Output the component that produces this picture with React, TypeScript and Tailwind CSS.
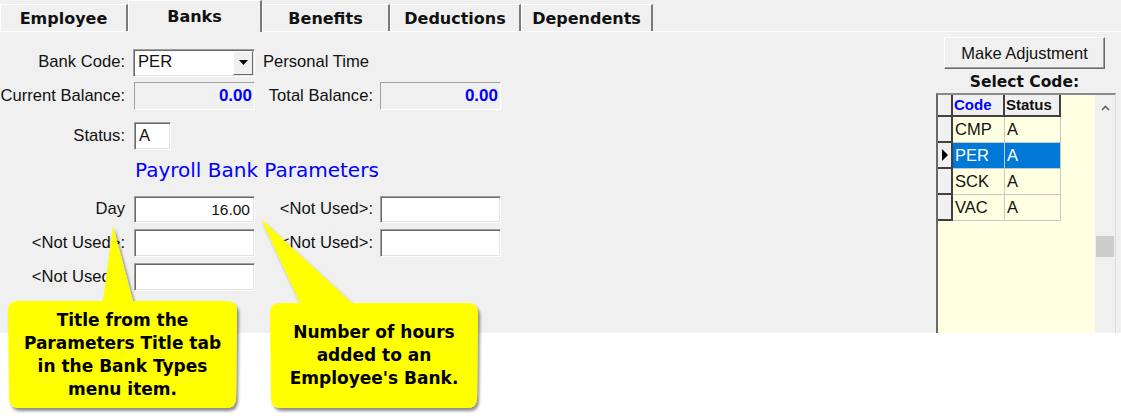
import React from 'react';

const tabs = [
  { label: 'Employee', cls: 'w-[128px]', active: false },
  { label: 'Banks', cls: 'w-[134px]', active: true },
  { label: 'Benefits', cls: 'w-[128px]', active: false },
  { label: 'Deductions', cls: 'w-[131px]', active: false },
  { label: 'Dependents', cls: 'w-[132px]', active: false },
];

const codes = [
  { code: 'CMP', status: 'A', selected: false },
  { code: 'PER', status: 'A', selected: true },
  { code: 'SCK', status: 'A', selected: false },
  { code: 'VAC', status: 'A', selected: false },
];

const sunken =
  'border border-t-[#a0a0a0] border-l-[#a0a0a0] border-b-white border-r-white shadow-[inset_1px_1px_0_#696969,inset_-1px_-1px_0_#e3e3e3] bg-white';

function Label({ text, w = 'w-[125px]' }: { text: string; w?: string }) {
  return <div className={`${w} shrink-0 text-right whitespace-nowrap`}>{text}</div>;
}

function TextBox({ value = '', w = 'w-[121px]', h = 'h-[27px]' }: { value?: string; w?: string; h?: string }) {
  return (
    <div className={`${w} ${h} ${sunken} flex items-center justify-end px-[4px] text-[15.5px]`}>{value}</div>
  );
}

function ReadOnlyBox({ value }: { value: string }) {
  return (
    <div className="w-[121px] h-[28px] border border-t-[#a0a0a0] border-l-[#a0a0a0] border-b-white border-r-white flex items-center justify-end pr-[2px] text-[17px] font-bold text-[#0000ff]">
      {value}
    </div>
  );
}

function Tabs() {
  return (
    <div className="flex items-end h-[32px] border-b border-white">
      {tabs.map((t) =>
        t.active ? (
          <div
            key={t.label}
            className={`${t.cls} h-[32px] -mb-px bg-[#f0f0f0] border-t border-l border-white border-r-2 border-r-[#7a7a7a] flex justify-center pt-[4px] font-bold text-[16px]`}
          >
            {t.label}
          </div>
        ) : (
          <div
            key={t.label}
            className={`${t.cls} h-[27px] border-t border-l border-white border-r-2 border-r-[#7a7a7a] flex items-center justify-center pt-px font-bold text-[16px]`}
          >
            {t.label}
          </div>
        )
      )}
    </div>
  );
}

function BankForm() {
  return (
    <div className="w-[936px] pt-[17px] font-['Liberation_Sans',Arial,sans-serif] text-[16.6px] text-[#111]">
      <div className="flex items-center h-[27px]">
        <Label text="Bank Code:" />
        <div className={`ml-[8px] w-[122px] h-[28px] ${sunken} flex items-center`}>
          <span className="pl-[4px] flex-1">PER</span>
          <div className="w-[20px] h-[24px] mr-[1px] bg-[#f0f0f0] border border-t-white border-l-white border-b-[#696969] border-r-[#696969] flex items-center justify-center">
            <svg width="9" height="5" viewBox="0 0 9 5">
              <path d="M0 0 H9 L4.5 5 Z" fill="#000" />
            </svg>
          </div>
        </div>
        <div className="ml-[8px]">Personal Time</div>
      </div>

      <div className="flex items-center h-[28px] mt-[6px]">
        <Label text="Current Balance:" />
        <div className="ml-[9px]">
          <ReadOnlyBox value="0.00" />
        </div>
        <Label text="Total Balance:" w="w-[118px]" />
        <div className="ml-[7px]">
          <ReadOnlyBox value="0.00" />
        </div>
      </div>

      <div className="flex items-center h-[28px] mt-[12px]">
        <Label text="Status:" />
        <div className={`ml-[9px] w-[37px] h-[28px] ${sunken} flex items-center pl-[4px]`}>A</div>
      </div>

      <div className="mt-[9px] ml-[135px] h-[22px] leading-[22px] text-[20px] text-[#0000ff] font-['DejaVu_Sans',Verdana,sans-serif]">
        Payroll Bank Parameters
      </div>

      <div className="flex items-center h-[27px] mt-[15px]">
        <Label text="Day" />
        <div className="ml-[9px]">
          <TextBox value="16.00" />
        </div>
        <Label text="<Not Used>:" w="w-[118px]" />
        <div className="ml-[7px]">
          <TextBox />
        </div>
      </div>

      <div className="flex items-center h-[28px] mt-[6px]">
        <Label text="<Not Used>:" />
        <div className="ml-[9px]">
          <TextBox h="h-[28px]" />
        </div>
        <Label text="<Not Used>:" w="w-[118px]" />
        <div className="ml-[7px]">
          <TextBox h="h-[28px]" />
        </div>
      </div>

      <div className="flex items-center h-[28px] mt-[6px]">
        <Label text="<Not Used>:" />
        <div className="ml-[9px]">
          <TextBox h="h-[28px]" />
        </div>
      </div>
    </div>
  );
}

function CodeGrid() {
  return (
    <div className="flex-1 w-[180px] flex border-t-2 border-l-2 border-t-[#8a8a8a] border-l-[#696969] border-r border-r-[#dcdcdc] overflow-hidden font-['Liberation_Sans',Arial,sans-serif]">
      <div className="flex-1 bg-[#ffffe1]">
        <div className="flex h-[22px] text-[15px] font-bold">
          <div className="w-[15px] bg-[#f0f0f0] border-r-2 border-b-2 border-[#404040]" />
          <div className="w-[52px] bg-[#f0f0f0] border-r-2 border-b-2 border-[#404040] pl-[1px] text-[#0000ff] flex items-center">
            Code
          </div>
          <div className="w-[56px] bg-[#f0f0f0] border-r-2 border-b-2 border-[#404040] pl-[1px] text-[#111] flex items-center">
            Status
          </div>
        </div>
        {codes.map((r) => (
          <div key={r.code} className="flex h-[26px] text-[16.5px]">
            <div className="w-[15px] bg-[#f0f0f0] border-r-2 border-b-2 border-[#404040] flex items-center justify-center">
              {r.selected && (
                <svg width="6" height="12" viewBox="0 0 6 12">
                  <path d="M0 0 L6 6 L0 12 Z" fill="#000" />
                </svg>
              )}
            </div>
            <div
              className={`w-[52px] border-r border-b border-[#c8c8c8] pl-[2px] flex items-center ${
                r.selected ? 'bg-[#0078d7] text-white' : 'text-[#111]'
              }`}
            >
              {r.code}
            </div>
            <div
              className={`w-[56px] border-r border-b border-[#c8c8c8] pl-[2px] flex items-center ${
                r.selected ? 'bg-[#0078d7] text-white' : 'text-[#111]'
              }`}
            >
              {r.status}
            </div>
          </div>
        ))}
      </div>
      <div className="w-[20px] bg-[#f0f0f0] flex flex-col items-center">
        <div className="h-[22px] flex items-center justify-center mt-[2px]">
          <svg width="9" height="6" viewBox="0 0 9 6">
            <path d="M1 5 L4.5 1.5 L8 5" stroke="#606060" strokeWidth="1.6" fill="none" />
          </svg>
        </div>
        <div className="mt-[117px] w-[18px] h-[21px] bg-[#cdcdcd]" />
      </div>
    </div>
  );
}

function Callouts() {
  return (
    <>
      <svg className="absolute left-0 top-0 pointer-events-none" width="1121" height="418">
        <defs>
          <filter id="sh" x="-10%" y="-10%" width="130%" height="130%">
            <feDropShadow dx="2" dy="3" stdDeviation="1.8" floodColor="#000" floodOpacity="0.45" />
          </filter>
        </defs>
        <path
          d="M18 301 L103 301 L113 226 L133 301 L227 301 Q237 301 237 311 L236 398 Q236 408 226 408 L19 408 Q9 408 9 398 L8 311 Q8 301 18 301 Z"
          fill="#ffff00"
          filter="url(#sh)"
        />
        <path
          d="M280 303 L300 303 L261 219 L352 303 L468 303 Q478 303 478 313 L477 398 Q477 408 467 408 L281 408 Q271 408 271 398 L270 313 Q270 303 280 303 Z"
          fill="#ffff00"
          filter="url(#sh)"
        />
      </svg>
      <div className="absolute left-[8px] top-[301px] w-[229px] h-[107px] flex items-center justify-center text-center font-['DejaVu_Sans',Verdana,sans-serif] font-bold text-[17px] leading-[23px] text-black">
        <div>
          Title from the
          <br />
          Parameters Title tab
          <br />
          in the Bank Types
          <br />
          menu item.
        </div>
      </div>
      <div className="absolute left-[270px] top-[303px] w-[208px] h-[105px] flex items-center justify-center text-center font-['DejaVu_Sans',Verdana,sans-serif] font-bold text-[17px] leading-[23px] text-black">
        <div>
          Number of hours
          <br />
          added to an
          <br />
          Employee's Bank.
        </div>
      </div>
    </>
  );
}

export default function App() {
  return (
    <div className="relative w-[1121px] h-[418px] bg-white overflow-hidden">
      <div className="h-[333px] bg-[#f0f0f0] flex flex-col overflow-hidden font-['DejaVu_Sans',Verdana,sans-serif] text-[#111]">
        <Tabs />
        <div className="flex flex-1 min-h-0">
          <BankForm />
          <div className="w-[185px] flex flex-col">
            <div className="mt-[5px] ml-[8px] w-[161px] h-[32px] bg-[#f0f0f0] border border-t-white border-l-white border-b-[#696969] border-r-[#696969] shadow-[inset_-1px_-1px_0_#a0a0a0] flex items-center justify-center font-['Liberation_Sans',Arial,sans-serif] text-[16.5px]">
              Make Adjustment
            </div>
            <div className="mt-[4px] ml-[8px] w-[161px] h-[20px] flex items-center justify-center font-bold text-[15.5px]">
              Select Code:
            </div>
            <CodeGrid />
          </div>
        </div>
      </div>
      <Callouts />
    </div>
  );
}
